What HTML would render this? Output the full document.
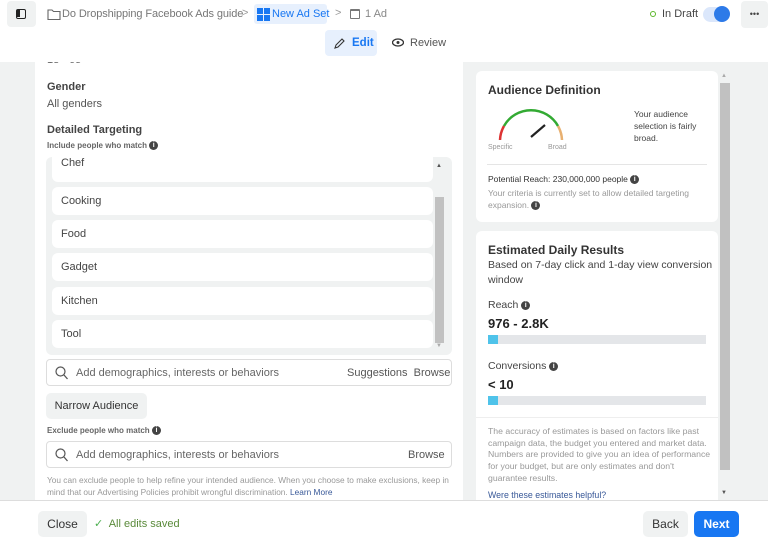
<!DOCTYPE html>
<html><head><style>
*{box-sizing:border-box;margin:0;padding:0}
body{width:768px;height:542px;overflow:hidden;font-family:"Liberation Sans",sans-serif;background:#f0f2f2;position:relative;color:#1c1e21}
.abs{position:absolute}
.top{left:0;top:0;width:768px;height:62px;background:#fff}
.t{font-size:11px;color:#606770}
.info{display:inline-block;width:9px;height:9px;border-radius:50%;background:#444;color:#fff;font-size:7px;line-height:9px;text-align:center;font-weight:bold;vertical-align:middle}
.left{left:35px;top:62px;width:428px;height:438px;background:#fff;overflow:hidden}
.item{position:absolute;left:17px;width:381px;height:28px;background:#fff;border-radius:6px;font-size:11px;color:#444;padding-left:9px;line-height:28px}
.card{background:#fff;border-radius:6px;position:absolute}
.bar{position:absolute;left:12px;width:218px;height:9px;background:#e4e6e9}
.bar i{position:absolute;left:0;top:0;width:10px;height:9px;background:#4fc3ea}
.foot{left:0;top:500px;width:768px;height:42px;background:#fff;border-top:1px solid #ddd}
.btn{position:absolute;border-radius:5px;font-size:12px;text-align:center}
</style></head><body>
<div class="abs top">
 <div class="abs" style="left:7px;top:1px;width:29px;height:26px;background:#f0f2f2;border-radius:4px"></div>
 <div class="abs" style="left:16px;top:9px;width:10px;height:10px;border:1.5px solid #222;border-radius:2px"><div style="width:3px;height:7px;background:#222"></div></div>
 <svg class="abs" style="left:47px;top:8px" width="14" height="12"><path d="M1 2h4l1.5 1.5H13v8H1z" fill="none" stroke="#666" stroke-width="1.1"/></svg>
 <div class="abs t" style="left:62px;top:8px;color:#777;letter-spacing:-0.1px">Do Dropshipping Facebook Ads guide</div>
 <div class="abs t" style="left:242px;top:7px;color:#999">&gt;</div>
 <div class="abs" style="left:254px;top:4px;width:73px;height:20px;background:#e7f0fd;border-radius:3px"></div>
 <svg class="abs" style="left:257px;top:8px" width="13" height="13"><rect x="0" y="0" width="6" height="6" fill="#1877f2"/><rect x="7" y="0" width="6" height="6" fill="#1877f2"/><rect x="0" y="7" width="6" height="6" fill="#1877f2"/><rect x="7" y="7" width="6" height="6" fill="#1877f2"/></svg>
 <div class="abs" style="left:272px;top:8px;font-size:11px;color:#1877f2">New Ad Set</div>
 <div class="abs t" style="left:335px;top:7px;color:#999">&gt;</div>
 <div class="abs" style="left:350px;top:9px;width:10px;height:10px;border:1px solid #777;border-radius:1px;border-top-width:2px"></div>
 <div class="abs t" style="left:365px;top:8px;color:#888">1 Ad</div>
 <div class="abs" style="left:325px;top:30px;width:52px;height:26px;background:#e7f0fd;border-radius:4px"></div>
 <svg class="abs" style="left:334px;top:37px" width="12" height="12"><path d="M1 11l1-3 6-6 2 2-6 6z" fill="none" stroke="#333" stroke-width="1.1"/></svg>
 <div class="abs" style="left:352px;top:37px;font-size:11.5px;color:#1877f2;font-weight:bold">Edit</div>
 <svg class="abs" style="left:392px;top:38px" width="12" height="9"><ellipse cx="6" cy="4.5" rx="5.5" ry="3.5" fill="none" stroke="#333" stroke-width="1.3"/><circle cx="6" cy="4.5" r="1.5" fill="#333"/></svg>
 <div class="abs t" style="left:410px;top:37px;color:#555">Review</div>
 <div class="abs" style="left:650px;top:11px;width:6px;height:6px;border:1.5px solid #5cb82a;border-radius:50%"></div>
 <div class="abs t" style="left:662px;top:8px;color:#444">In Draft</div>
 <div class="abs" style="left:703px;top:7px;width:26px;height:15px;background:#dbe7fb;border-radius:8px"></div>
 <div class="abs" style="left:714px;top:6px;width:16px;height:16px;background:#2d7ae8;border-radius:50%"></div>
 <div class="abs" style="left:741px;top:1px;width:27px;height:27px;background:#f0f2f2;border-radius:4px;font-size:9px;text-align:center;line-height:26px;color:#444">•••</div>
</div>
<div class="abs left">
 <div class="abs" style="left:12px;top:-8px;font-size:11px;color:#666">18 - 65+</div>
 <div class="abs" style="left:12px;top:19px;font-size:11px;font-weight:bold;color:#444">Gender</div>
 <div class="abs" style="left:12px;top:36px;font-size:11px;color:#555">All genders</div>
 <div class="abs" style="left:12px;top:62px;font-size:11px;font-weight:bold;color:#444">Detailed Targeting</div>
 <div class="abs" style="left:12px;top:79px;font-size:8px;font-weight:bold;color:#666">Include people who match <span class="info">i</span></div>
 <div class="abs" style="left:11px;top:95px;width:406px;height:198px;background:#f0f2f2;border-radius:6px;overflow:hidden">
  <div class="item" style="left:6px;top:-6px;height:31px;line-height:24px">Chef</div>
  <div class="item" style="left:6px;top:30px">Cooking</div>
  <div class="item" style="left:6px;top:63px">Food</div>
  <div class="item" style="left:6px;top:96px">Gadget</div>
  <div class="item" style="left:6px;top:130px">Kitchen</div>
  <div class="item" style="left:6px;top:163px">Tool</div>
  <div class="abs" style="left:389px;top:40px;width:9px;height:146px;background:#c1c1c1"></div>
  <div class="abs" style="left:390px;top:6px;font-size:6px;color:#555">▲</div>
  <div class="abs" style="left:390px;top:186px;font-size:6px;color:#aaa">▼</div>
 </div>
 <div class="abs" style="left:11px;top:297px;width:406px;height:27px;border:1px solid #ddd;border-radius:4px;background:#fff">
  <svg class="abs" style="left:8px;top:6px" width="13" height="14"><circle cx="5.5" cy="5.5" r="4.5" fill="none" stroke="#555" stroke-width="1.2"/><path d="M9 9l3.5 4" stroke="#555" stroke-width="1.3"/></svg>
  <div class="abs" style="left:29px;top:7px;font-size:11px;color:#666">Add demographics, interests or behaviors</div>
  <div class="abs" style="left:300px;top:7px;font-size:11px;color:#555">Suggestions&nbsp; Browse</div>
 </div>
 <div class="btn" style="left:11px;top:331px;width:101px;height:26px;background:#f0f2f2;line-height:26px;font-size:11px;color:#333">Narrow Audience</div>
 <div class="abs" style="left:12px;top:364px;font-size:8px;font-weight:bold;color:#666">Exclude people who match <span class="info">i</span></div>
 <div class="abs" style="left:11px;top:379px;width:406px;height:27px;border:1px solid #ddd;border-radius:4px;background:#fff">
  <svg class="abs" style="left:8px;top:6px" width="13" height="14"><circle cx="5.5" cy="5.5" r="4.5" fill="none" stroke="#555" stroke-width="1.2"/><path d="M9 9l3.5 4" stroke="#555" stroke-width="1.3"/></svg>
  <div class="abs" style="left:29px;top:7px;font-size:11px;color:#666">Add demographics, interests or behaviors</div>
  <div class="abs" style="left:361px;top:7px;font-size:11px;color:#555">Browse</div>
 </div>
 <div class="abs" style="left:12px;top:412px;font-size:8.3px;color:#999;line-height:12px;width:410px">You can exclude people to help refine your intended audience. When you choose to make exclusions, keep in mind that our Advertising Policies prohibit wrongful discrimination. <span style="color:#385898">Learn More</span></div>
</div>
<div class="card" style="left:476px;top:71px;width:242px;height:151px">
 <div class="abs" style="left:12px;top:12px;font-size:12px;font-weight:bold;color:#333">Audience Definition</div>
 <svg class="abs" style="left:20px;top:35px" width="70" height="36"><path d="M4 34 A31 31 0 0 1 8 20" fill="none" stroke="#d33" stroke-width="2.5"/><path d="M8 20 A31 31 0 0 1 62 20" fill="none" stroke="#3a3" stroke-width="2.5"/><path d="M62 20 A31 31 0 0 1 66 34" fill="none" stroke="#e8b070" stroke-width="2.5"/><path d="M35 31 L49 19" stroke="#222" stroke-width="2.2"/></svg>
 <div class="abs" style="left:12px;top:73px;font-size:7px;color:#999">Specific</div>
 <div class="abs" style="left:72px;top:73px;font-size:7px;color:#999">Broad</div>
 <div class="abs" style="left:158px;top:37px;font-size:8.5px;line-height:12px;color:#444">Your audience<br>selection is fairly<br>broad.</div>
 <div class="abs" style="left:11px;top:93px;width:220px;height:1px;background:#e5e5e5"></div>
 <div class="abs" style="left:12px;top:103px;font-size:8.5px;color:#333">Potential Reach: 230,000,000 people <span class="info">i</span></div>
 <div class="abs" style="left:12px;top:116px;font-size:8.5px;color:#999;line-height:12px">Your criteria is currently set to allow detailed targeting expansion. <span class="info">i</span></div>
</div>
<div class="card" style="left:476px;top:231px;width:242px;height:275px">
 <div class="abs" style="left:12px;top:12px;font-size:12px;font-weight:bold;color:#333">Estimated Daily Results</div>
 <div class="abs" style="left:12px;top:27px;font-size:10.5px;color:#444;line-height:15px;width:230px">Based on 7-day click and 1-day view conversion window</div>
 <div class="abs" style="left:12px;top:68px;font-size:10.5px;color:#444">Reach <span class="info">i</span></div>
 <div class="abs" style="left:12px;top:85px;font-size:13px;font-weight:bold;color:#222">976 - 2.8K</div>
 <div class="bar" style="top:104px"><i></i></div>
 <div class="abs" style="left:12px;top:129px;font-size:10.5px;color:#444">Conversions <span class="info">i</span></div>
 <div class="abs" style="left:12px;top:146px;font-size:13px;font-weight:bold;color:#222">&lt; 10</div>
 <div class="bar" style="top:165px"><i></i></div>
 <div class="abs" style="left:0;top:186px;width:242px;height:1px;background:#eee"></div>
 <div class="abs" style="left:12px;top:195px;font-size:8.7px;color:#999;line-height:11.7px;width:224px">The accuracy of estimates is based on factors like past campaign data, the budget you entered and market data. Numbers are provided to give you an idea of performance for your budget, but are only estimates and don't guarantee results.</div>
 <div class="abs" style="left:12px;top:259px;font-size:8.8px;color:#385898">Were these estimates helpful?</div>
</div>
<div class="abs" style="left:720px;top:83px;width:10px;height:155px;background:#c1c1c1"></div>
<div class="abs" style="left:720px;top:238px;width:10px;height:232px;background:#c1c1c1"></div>
<div class="abs" style="left:721px;top:73px;font-size:6px;color:#aaa">▲</div>
<div class="abs" style="left:721px;top:490px;font-size:6px;color:#555">▼</div>
<div class="abs foot">
 <div class="btn" style="left:38px;top:10px;width:49px;height:26px;background:#f0f2f2;line-height:26px;color:#333">Close</div>
 <div class="abs" style="left:94px;top:16px;font-size:11px;color:#5a8a3a"><span style="color:#4caf50">✓</span>&nbsp; All edits saved</div>
 <div class="btn" style="left:643px;top:10px;width:45px;height:26px;background:#f0f2f2;line-height:26px;color:#333">Back</div>
 <div class="btn" style="left:694px;top:10px;width:45px;height:26px;background:#1877f2;line-height:26px;color:#fff;font-weight:bold">Next</div>
</div>
</body></html>
